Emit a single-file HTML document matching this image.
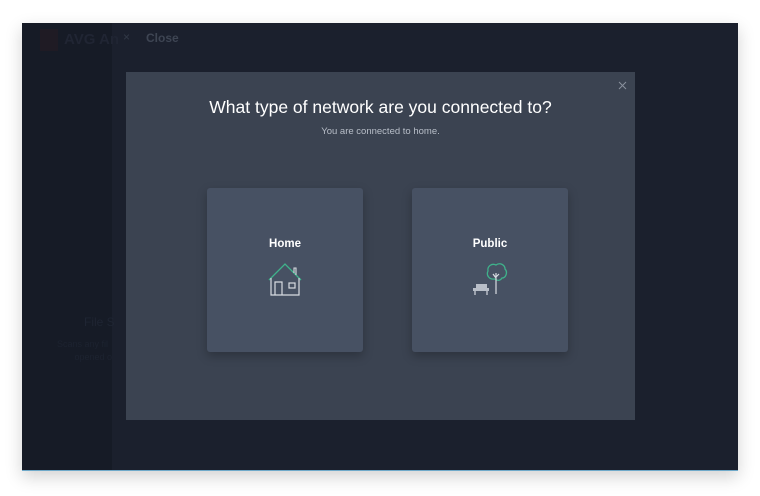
<!DOCTYPE html>
<html><head><style>
body{margin:0;width:760px;height:496px;background:#fff;font-family:"Liberation Sans",sans-serif;position:relative;overflow:hidden}
.win{position:absolute;left:22px;top:23px;width:716px;height:447px;background:#1b202d;box-shadow:0 6px 16px rgba(0,0,0,.18);border-bottom:1px solid #6fa9c9}
.side{position:absolute;left:0;top:0;width:90px;height:447px;background:#161b26}
.modal{position:absolute;left:126px;top:72px;width:509px;height:348px;background:#3b4351}
.card{position:absolute;top:188px;width:156px;height:164px;background:#475163;border-radius:3px;box-shadow:0 4px 10px rgba(0,0,0,.25)}
.card .t{position:absolute;top:50px;width:100%;text-align:center;color:#fff;font-weight:bold;font-size:11.5px}
</style></head><body>
<div class="win"><div class="side"></div>
<div style="position:absolute;left:18px;top:6px;width:18px;height:22px;background:#1f1b24"></div>
<div style="position:absolute;left:42px;top:8px;color:#202533;font-size:15px;font-weight:bold">AVG An</div>
<div style="position:absolute;left:101px;top:7px;color:#323947;font-size:12px">×</div>
<div style="position:absolute;left:124px;top:8px;color:#3e4553;font-size:12px;font-weight:bold">Close</div>
<div style="position:absolute;left:62px;top:292px;color:#1f2533;font-size:12px">File S</div>
<div style="position:absolute;left:35px;top:315px;color:#1d2330;font-size:9px;line-height:13px">Scans any fil<br>&nbsp;&nbsp;&nbsp;&nbsp;&nbsp;&nbsp;&nbsp;opened o</div>
</div>
<div class="modal">
<div style="position:absolute;left:0;width:100%;top:25px;text-align:center;color:#fff;font-size:17.5px">What type of network are you connected to?</div>
<div style="position:absolute;left:0;width:100%;top:54px;text-align:center;color:#b8bec8;font-size:9.5px">You are connected to home.</div>
<svg style="position:absolute;left:492px;top:9px" width="9" height="9"><path d="M1 1L8 8M8 1L1 8" stroke="#8a919d" stroke-width="1"/></svg>
</div>
<div class="card" style="left:207px"><div class="t">Home</div>
<svg style="position:absolute;left:60px;top:72px" width="40" height="40" viewBox="0 0 40 40" fill="none">
<path d="M2 20L18 4L34 20" stroke="#3fb28b" stroke-width="1.3"/>
<path d="M4 18V35H32V18M8 35V22H15V35" stroke="#d8dce2" stroke-width="1.2"/>
<rect x="22" y="23" width="6" height="5" stroke="#d8dce2" stroke-width="1.2"/>
<path d="M27 13V8H29V15" stroke="#d8dce2" stroke-width="1.1"/>
</svg></div>
<div class="card" style="left:412px"><div class="t">Public</div>
<svg style="position:absolute;left:58px;top:72px" width="44" height="40" viewBox="0 0 44 40" fill="none">
<path d="M25 19C19 20 16 15 18 11C17 6 22 3 26 5C30 2 35 5 35 9C38 12 36 18 32 18C30 21 27 21 25 19Z" stroke="#3fb28b" stroke-width="1.3"/>
<path d="M26 13V34M26 18L23 14M26 17L29 14" stroke="#d8dce2" stroke-width="1.2"/>
<rect x="6" y="24" width="11" height="4" fill="#b8bec8"/><rect x="3" y="28" width="16" height="3" fill="#b8bec8"/>
<path d="M5 31V35M17 31V35" stroke="#b8bec8" stroke-width="1.5"/>
</svg></div>
</body></html>
